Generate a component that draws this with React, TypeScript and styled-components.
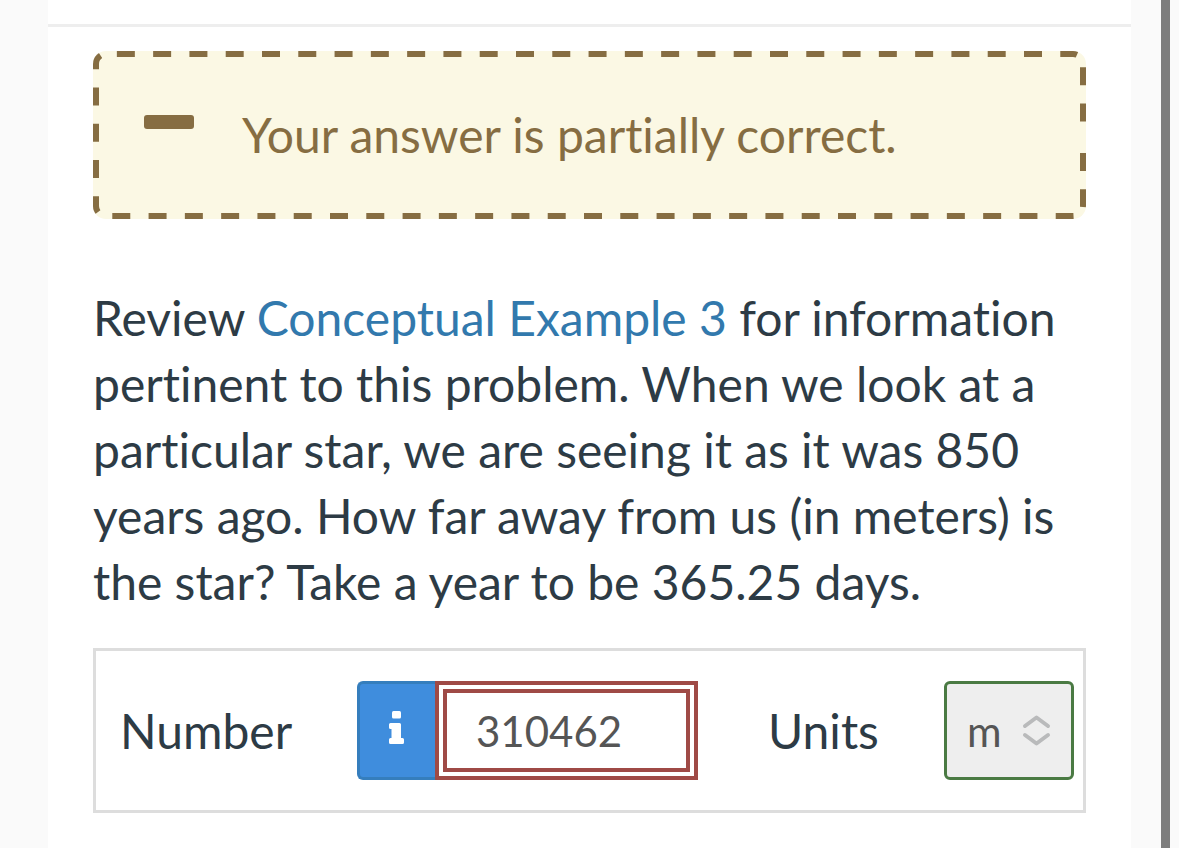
import { useLayoutEffect, useRef, useState } from "react";
import styled, { createGlobalStyle } from "styled-components";

const GlobalStyle = createGlobalStyle`
  * { box-sizing: border-box; }
  body {
    margin: 0;
    background: #fafafa;
    color: #2d3b45;
    font-family: Lato, "Liberation Sans", sans-serif;
    font-size: 48px;
    font-variant-ligatures: none;
    line-height: 66px;
  }
`;

const Page = styled.div`
  display: flex;
  min-height: 100vh;
  padding: 0 9px 0 48px;
`;

const Card = styled.main`
  flex: 1;
  min-width: 0;
  background: #fff;
`;

const PageEdge = styled.div`
  width: 9px;
  margin-left: 30px;
  background: #7d7d7d;
`;

const CardHeader = styled.div`
  height: 27px;
  border-bottom: 3px solid #eee;
`;

const Question = styled.div`
  padding: 24px 45px 36px;
`;

const Alert = styled.div`
  position: relative;
  display: flex;
  gap: 48px;
  padding: 51px;
  overflow: hidden;
  border-radius: 13px;
  background: #fbf8e4;
  color: #866d42;
`;

const Frame = styled.svg`
  position: absolute;
  inset: 0;
  width: 100%;
  height: 100%;
  pointer-events: none;
`;

const MinusIcon = styled.svg`
  flex: none;
  width: 50px;
  height: 14px;
  margin-top: 13px;
`;

const Prompt = styled.p`
  margin: 0;
  padding: 66px 0 33px;
`;

const Link = styled.a`
  color: #3279ad;
  text-decoration: none;
`;

const AnswerRow = styled.div`
  display: flex;
  align-items: center;
  min-height: 165px;
  padding: 0 9px 0 24px;
  border: 3px solid #ddd;
`;

const FieldLabel = styled.label<{ $width: number }>`
  flex: none;
  width: ${(p) => p.$width}px;
`;

const NumberField = styled.div`
  display: flex;
  height: 99px;
`;

const InfoButton = styled.button`
  display: flex;
  align-items: center;
  justify-content: center;
  width: 78px;
  padding: 0 2px 6px 0;
  border: 3px solid #357ebd;
  border-right: 0;
  border-radius: 6px 0 0 6px;
  background: #3f8ddd;
`;

const NumberInput = styled.input`
  width: 263px;
  padding: 0 29px;
  border: 12px double #9f4a46;
  border-radius: 0;
  background: #fff;
  color: #555;
  font: 42px Lato, "Liberation Sans", sans-serif;
  outline: none;
`;

const SelectWrap = styled.div`
  position: relative;
  margin-left: auto;
`;

const UnitSelect = styled.select`
  display: block;
  width: 130px;
  height: 99px;
  padding: 0 0 0 20px;
  appearance: none;
  border: 3px solid #4a7a43;
  border-radius: 6px;
  background: #eee;
  color: #555;
  font: 42px Lato, "Liberation Sans", sans-serif;
`;

const SelectArrows = styled.svg`
  position: absolute;
  top: 33px;
  right: 23px;
  width: 29px;
  height: 33px;
  pointer-events: none;
`;

const Units = styled.div`
  display: flex;
  flex: 1;
  align-items: center;
  margin-left: 70px;
`;

const DASH = 18;
const RADIUS = 13;

/* Dashes run clockwise from just below the middle of the right side. */
function DashedFrame() {
  const ref = useRef<SVGSVGElement>(null);
  const [{ w, h }, setSize] = useState({ w: 0, h: 0 });

  useLayoutEffect(() => {
    const el = ref.current;
    if (!el) return;
    const measure = () => {
      const box = el.getBoundingClientRect();
      setSize({ w: box.width, h: box.height });
    };
    measure();
    const observer = new ResizeObserver(measure);
    observer.observe(el);
    return () => observer.disconnect();
  }, []);

  const r = RADIUS;
  const start = h / 2 + DASH;
  const perimeter = 2 * (w + h) - 8 * r + 2 * Math.PI * r;
  const gap = DASH + DASH / Math.max(1, Math.floor(perimeter / DASH / 2));
  const arc = (x: number, y: number) => `A${r} ${r} 0 0 1 ${x} ${y}`;
  const d = [
    `M${w} ${start}V${h - r}`,
    arc(w - r, h),
    `H${r}`,
    arc(0, h - r),
    `V${r}`,
    arc(r, 0),
    `H${w - r}`,
    arc(w, r),
    `V${h / 2}`,
  ].join("");

  return (
    <Frame ref={ref} aria-hidden="true">
      {w > 0 && (
        <path d={d} fill="none" stroke="#866d42" strokeWidth={12} strokeDasharray={`${DASH} ${gap}`} />
      )}
    </Frame>
  );
}

export default function App() {
  return (
    <>
      <GlobalStyle />
      <Page>
        <Card>
          <CardHeader />
          <Question>
            <Alert role="status">
              <DashedFrame />
              <MinusIcon viewBox="0 0 50 14" aria-hidden="true">
                <rect width="50" height="14" rx="3" fill="#866d42" />
              </MinusIcon>
              <span>Your answer is partially correct.</span>
            </Alert>
            <Prompt>
              Review <Link href="#example-3">Conceptual Example 3</Link> for information pertinent to
              this problem. When we look at a particular star, we are seeing it as it was 850 years
              ago. How far away from us (in meters) is the star? Take a year to be 365.25 days.
            </Prompt>
            <AnswerRow>
              <FieldLabel htmlFor="number" $width={237}>
                Number
              </FieldLabel>
              <NumberField>
                <InfoButton type="button" aria-label="Information">
                  <svg width="15" height="33" viewBox="0 0 15 33" fill="#fff" aria-hidden="true">
                    <rect x="3" width="9" height="7.500" rx="1.5" />
                    <path d="M1.500 12H10.500Q12 12 12 13.500V27H13.500Q15 27 15 28.500V31.500Q15 33 13.500 33H1.500Q0 33 0 31.500V28.500Q0 27 1.500 27H2.500V18H1.500Q0 18 0 16.500V13.500Q0 12 1.500 12Z" />
                  </svg>
                </InfoButton>
                <NumberInput id="number" type="text" defaultValue="310462" />
              </NumberField>
              <Units>
                <FieldLabel htmlFor="units" $width={111}>
                  Units
                </FieldLabel>
                <SelectWrap>
                  <UnitSelect id="units" defaultValue="m">
                    <option value="m">m</option>
                  </UnitSelect>
                  <SelectArrows
                    viewBox="0 0 29 33"
                    fill="none"
                    stroke="#b9babb"
                    strokeWidth="4"
                    strokeLinecap="round"
                    strokeLinejoin="round"
                    aria-hidden="true"
                  >
                    <path d="M3 12L14.500 3.500L26 12M3 21L14.500 29.500L26 21" />
                  </SelectArrows>
                </SelectWrap>
              </Units>
            </AnswerRow>
          </Question>
        </Card>
        <PageEdge />
      </Page>
    </>
  );
}
